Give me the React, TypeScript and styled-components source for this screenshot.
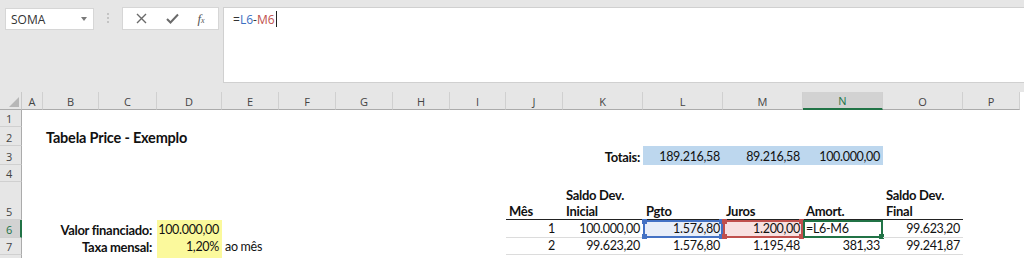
import React from "react";
import styled, { createGlobalStyle, css } from "styled-components";

const GlobalStyle = createGlobalStyle`
  html, body { margin: 0; padding: 0; background: #fff; }
  body { font-family: "Open Sans", "Liberation Sans", sans-serif; overflow: hidden; }
`;

// larguras das colunas (cabeçalho de linha + A..P + sobra)
const COLS = [
  ["A", 21], ["B", 56], ["C", 58], ["D", 65], ["E", 57], ["F", 57], ["G", 57], ["H", 57],
  ["I", 56], ["J", 57], ["K", 80], ["L", 80], ["M", 80], ["N", 80], ["O", 80], ["P", 57],
] as const;
const ROWS = [17, 19, 19, 17, 38, 18, 17, 10];

const colIndex = (letter: string) => COLS.findIndex((c) => c[0] === letter) + 2;

const Page = styled.div`
  width: 1024px;
  height: 258px;
  overflow: hidden;
  background: #e6e6e6;
`;

const Toolbar = styled.div`
  display: flex;
  align-items: flex-start;
  height: 92px;
  box-sizing: border-box;
  padding-top: 7px;
  padding-left: 5px;
`;

const NameBox = styled.div`
  width: 89px;
  height: 22px;
  box-sizing: border-box;
  margin-top: 1px;
  background: #fff;
  border: 1px solid #d6d6d6;
  display: flex;
  align-items: center;
  justify-content: space-between;
  padding: 0 6px 0 5px;
  font-size: 12px;
  color: #333;
`;

const Arrow = styled.span`
  width: 0;
  height: 0;
  border-left: 3.5px solid transparent;
  border-right: 3.5px solid transparent;
  border-top: 4px solid #7a7a7a;
`;

const Grip = styled.div`
  width: 28px;
  height: 22px;
  display: flex;
  flex-direction: column;
  align-items: center;
  justify-content: center;
  gap: 2px;
  span {
    width: 2px;
    height: 2px;
    background: #c4c4c4;
  }
`;

const FxButtons = styled.div`
  width: 97px;
  height: 23px;
  box-sizing: border-box;
  background: #fff;
  border: 1px solid #d6d6d6;
  display: flex;
  align-items: center;
  justify-content: space-around;
  padding: 0 4px;
  color: #6a6a6a;
`;

const FxLabel = styled.span`
  font-family: "Liberation Serif", serif;
  font-style: italic;
  font-size: 13px;
  color: #555;
  sub { font-size: 8px; vertical-align: baseline; }
`;

const FormulaInput = styled.div`
  flex: 1;
  margin-left: 4px;
  height: 76px;
  box-sizing: border-box;
  background: #fff;
  border: 1px solid #d0d0d0;
  border-right: none;
  padding: 3px 0 0 9px;
  font-size: 12px;
  color: #333;
  display: flex;
  align-items: flex-start;
`;

const Ref = styled.span<{ $color: string }>`
  color: ${(p) => p.$color};
`;

const Caret = styled.span`
  display: inline-block;
  width: 1px;
  height: 16px;
  background: #222;
  margin-left: 1px;
`;

const Sheet = styled.div`
  display: grid;
  grid-template-columns: 22px ${COLS.map((c) => c[1] + "px").join(" ")} 1fr;
  grid-template-rows: 18px ${ROWS.map((r) => r + "px").join(" ")};
  background: #fff;
`;

const Corner = styled.div`
  grid-column: 1;
  grid-row: 1;
  background: #e6e6e6;
  border-right: 1px solid #c9c9c9;
  border-bottom: 1px solid #ababab;
  position: relative;
  &::after {
    content: "";
    position: absolute;
    right: 2px;
    bottom: 2px;
    width: 0;
    height: 0;
    border-left: 10px solid transparent;
    border-bottom: 10px solid #b7b7b7;
  }
`;

const ColHead = styled.div<{ $col: number; $active?: boolean }>`
  grid-column: ${(p) => p.$col};
  grid-row: 1;
  box-sizing: border-box;
  background: ${(p) => (p.$active ? "#d2d2d2" : "#e6e6e6")};
  border-right: 1px solid #d0d0d0;
  border-bottom: ${(p) => (p.$active ? "2px solid #217346" : "1px solid #ababab")};
  display: flex;
  align-items: center;
  justify-content: center;
  font-size: 11px;
  color: ${(p) => (p.$active ? "#217346" : "#444")};
  padding-top: 1px;
`;

const RowHead = styled.div<{ $row: number; $active?: boolean }>`
  grid-column: 1;
  grid-row: ${(p) => p.$row};
  box-sizing: border-box;
  background: ${(p) => (p.$active ? "#d2d2d2" : "#e6e6e6")};
  border-right: ${(p) => (p.$active ? "2px solid #217346" : "1px solid #ababab")};
  border-bottom: 1px solid #d0d0d0;
  display: flex;
  align-items: flex-end;
  padding: 0 0 0 6px;
  font-size: 11px;
  line-height: 15px;
  color: ${(p) => (p.$active ? "#217346" : "#444")};
`;

type CellProps = {
  $col: number;
  $row: number;
  $span?: number;
  $align?: "left" | "right";
  $bold?: boolean;
  $title?: boolean;
  $fill?: string;
  $line?: "dark" | "light";
  $frame?: string;
};

const Cell = styled.div<CellProps>`
  grid-column: ${(p) => p.$col} / span ${(p) => p.$span ?? 1};
  grid-row: ${(p) => p.$row};
  position: relative;
  box-sizing: border-box;
  display: flex;
  flex-direction: column;
  justify-content: flex-end;
  align-items: ${(p) => (p.$align === "right" ? "flex-end" : "flex-start")};
  padding: 0 3px 0 3px;
  font-family: Lato, "Liberation Sans", sans-serif;
  font-size: ${(p) => (p.$title ? "14.5px" : p.$bold ? "13px" : "12.5px")};
  letter-spacing: ${(p) => (p.$title ? "-0.2px" : "-0.3px")};
  line-height: 16px;
  font-weight: ${(p) => (p.$bold ? 700 : 400)};
  color: #111;
  white-space: nowrap;
  background: ${(p) => p.$fill ?? "transparent"};
  ${(p) => p.$line === "dark" && css`border-bottom: 1px solid #222;`}
  ${(p) => p.$line === "light" && css`border-bottom: 1px solid #dcdcdc;`}
  ${(p) =>
    p.$frame &&
    css`
      border: 2px solid ${p.$frame};
      padding: 0 1px 0 1px;
      line-height: 14px;
    `}
`;

const Handle = styled.span<{ $color: string; $pos: "tl" | "tr" | "bl" | "br" }>`
  position: absolute;
  width: 5px;
  height: 5px;
  background: ${(p) => p.$color};
  ${(p) => (p.$pos[0] === "t" ? "top: -3px;" : "bottom: -3px;")}
  ${(p) => (p.$pos[1] === "l" ? "left: -3px;" : "right: -3px;")}
`;

const Corners = ({ color, only }: { color: string; only?: "br" }) => (
  <>
    {(only ? [only] : (["tl", "tr", "bl", "br"] as const)).map((pos) => (
      <Handle key={pos} $color={color} $pos={pos} />
    ))}
  </>
);

const XIcon = () => (
  <svg width="11" height="11" viewBox="0 0 11 11">
    <path d="M1 1 L10 10 M10 1 L1 10" stroke="#6a6a6a" strokeWidth="1.4" fill="none" />
  </svg>
);
const CheckIcon = () => (
  <svg width="13" height="11" viewBox="0 0 13 11">
    <path d="M1 6 L4.5 9.5 L12 1.5" stroke="#6a6a6a" strokeWidth="2" fill="none" />
  </svg>
);

const BLUE = "#bdd7ee";
const YELLOW = "#fbf99c";

export default function App() {
  const J = colIndex("J");
  const K = colIndex("K");
  const L = colIndex("L");
  const M = colIndex("M");
  const N = colIndex("N");
  const O = colIndex("O");

  const rows = [
    ["1", "100.000,00", "1.576,80", "1.200,00", "=L6-M6", "99.623,20"],
    ["2", "99.623,20", "1.576,80", "1.195,48", "381,33", "99.241,87"],
  ];

  return (
    <Page>
      <GlobalStyle />
      <Toolbar>
        <NameBox>
          SOMA
          <Arrow />
        </NameBox>
        <Grip>
          <span />
          <span />
          <span />
        </Grip>
        <FxButtons>
          <XIcon />
          <CheckIcon />
          <FxLabel>
            f<sub>x</sub>
          </FxLabel>
        </FxButtons>
        <FormulaInput>
          =<Ref $color="#3b6fc2">L6</Ref>-<Ref $color="#c0504d">M6</Ref>
          <Caret />
        </FormulaInput>
      </Toolbar>
      <Sheet>
        <Corner />
        {COLS.map(([letter], i) => (
          <ColHead key={letter} $col={i + 2} $active={letter === "N"}>
            {letter}
          </ColHead>
        ))}
        {ROWS.map((_, i) => (
          <RowHead key={i} $row={i + 2} $active={i === 5}>
            {i < 7 ? i + 1 : ""}
          </RowHead>
        ))}

        <Cell $col={colIndex("B")} $row={3} $bold $title $span={3}>
          Tabela Price - Exemplo
        </Cell>

        <Cell $col={K} $row={4} $bold $align="right">
          Totais:
        </Cell>
        <Cell $col={L} $row={4} $align="right" $fill={BLUE}>189.216,58</Cell>
        <Cell $col={M} $row={4} $align="right" $fill={BLUE}>89.216,58</Cell>
        <Cell $col={N} $row={4} $align="right" $fill={BLUE}>100.000,00</Cell>

        <Cell $col={J} $row={6} $bold $line="dark">Mês</Cell>
        <Cell $col={K} $row={6} $bold $line="dark">
          <span>Saldo Dev.</span>
          <span>Inicial</span>
        </Cell>
        <Cell $col={L} $row={6} $bold $line="dark">Pgto</Cell>
        <Cell $col={M} $row={6} $bold $line="dark">Juros</Cell>
        <Cell $col={N} $row={6} $bold $line="dark">Amort.</Cell>
        <Cell $col={O} $row={6} $bold $line="dark">
          <span>Saldo Dev.</span>
          <span>Final</span>
        </Cell>

        {rows.map((r, i) => {
          const row = 7 + i;
          const first = i === 0;
          return (
            <React.Fragment key={i}>
              <Cell $col={J} $row={row} $align="right" $line="light" style={{ paddingRight: 8 }}>
                {r[0]}
              </Cell>
              <Cell $col={K} $row={row} $align="right" $line="light">{r[1]}</Cell>
              {first ? (
                <>
                  <Cell $col={L} $row={row} $align="right" $fill="#e8eef9" $frame="#4472c4">
                    {r[2]}
                    <Corners color="#4472c4" />
                  </Cell>
                  <Cell $col={M} $row={row} $align="right" $fill="#f8e1e1" $frame="#c0504d">
                    {r[3]}
                    <Corners color="#c0504d" />
                  </Cell>
                  <Cell $col={N} $row={row} $frame="#217346">
                    {r[4]}
                    <Corners color="#217346" only="br" />
                  </Cell>
                </>
              ) : (
                <>
                  <Cell $col={L} $row={row} $align="right" $line="light">{r[2]}</Cell>
                  <Cell $col={M} $row={row} $align="right" $line="light">{r[3]}</Cell>
                  <Cell $col={N} $row={row} $align="right" $line="light">{r[4]}</Cell>
                </>
              )}
              <Cell $col={O} $row={row} $align="right" $line="light">{r[5]}</Cell>
            </React.Fragment>
          );
        })}

        <Cell $col={colIndex("C")} $row={7} $bold $align="right" style={{ paddingRight: 5 }}>
          Valor financiado:
        </Cell>
        <Cell $col={colIndex("D")} $row={7} $align="right" $fill={YELLOW}>100.000,00</Cell>
        <Cell $col={colIndex("C")} $row={8} $bold $align="right" style={{ paddingRight: 5 }}>
          Taxa mensal:
        </Cell>
        <Cell $col={colIndex("D")} $row={8} $align="right" $fill={YELLOW}>1,20%</Cell>
        <Cell $col={colIndex("E")} $row={8}>ao mês</Cell>
        <Cell $col={colIndex("D")} $row={9} $fill={YELLOW} />
      </Sheet>
    </Page>
  );
}
